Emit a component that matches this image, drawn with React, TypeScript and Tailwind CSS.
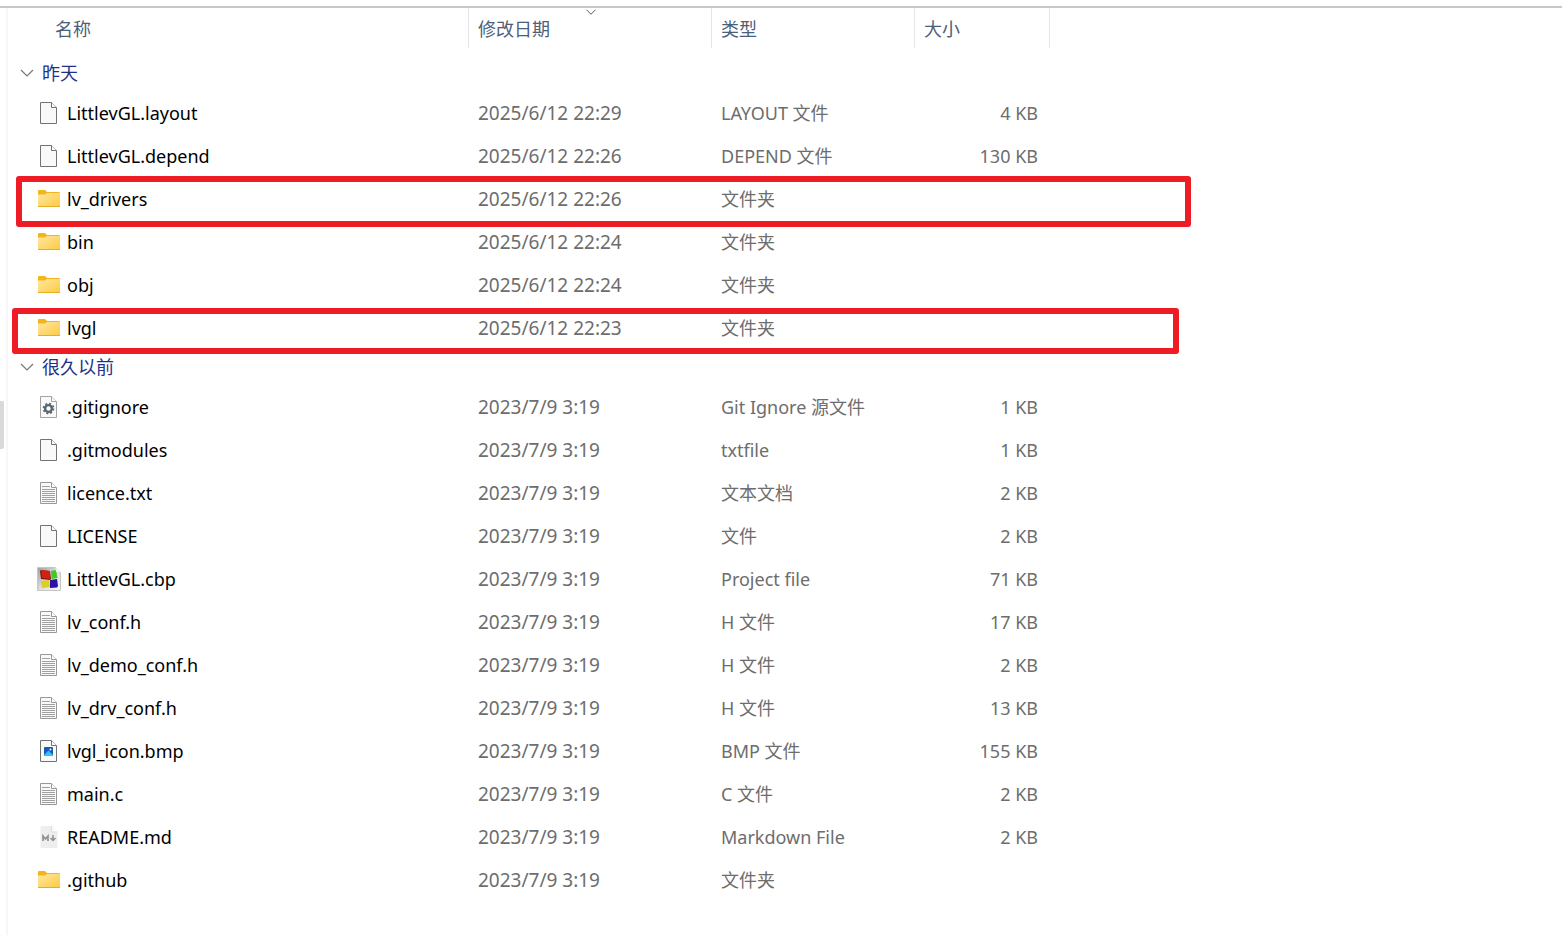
import { useState } from "react";
import type { ReactNode } from "react";

type IconKind = "page" | "folder" | "config" | "text" | "project" | "image" | "markdown";

type Entry = {
	name: string;
	date: string;
	type: string;
	size?: string;
	icon: IconKind;
	mark?: string;
};

type Group = {
	title: string;
	entries: Entry[];
};

const groups: Group[] = [
	{
		title: "昨天",
		entries: [
			{ name: "LittlevGL.layout", date: "2025/6/12 22:29", type: "LAYOUT 文件", size: "4 KB", icon: "page" },
			{ name: "LittlevGL.depend", date: "2025/6/12 22:26", type: "DEPEND 文件", size: "130 KB", icon: "page" },
			{
				name: "lv_drivers",
				date: "2025/6/12 22:26",
				type: "文件夹",
				icon: "folder",
				mark: "left-2 -top-0.5 h-[51px] w-[1175px]",
			},
			{ name: "bin", date: "2025/6/12 22:24", type: "文件夹", icon: "folder" },
			{ name: "obj", date: "2025/6/12 22:24", type: "文件夹", icon: "folder" },
			{
				name: "lvgl",
				date: "2025/6/12 22:23",
				type: "文件夹",
				icon: "folder",
				mark: "left-1 top-px h-[46px] w-[1167px]",
			},
		],
	},
	{
		title: "很久以前",
		entries: [
			{ name: ".gitignore", date: "2023/7/9 3:19", type: "Git Ignore 源文件", size: "1 KB", icon: "config" },
			{ name: ".gitmodules", date: "2023/7/9 3:19", type: "txtfile", size: "1 KB", icon: "page" },
			{ name: "licence.txt", date: "2023/7/9 3:19", type: "文本文档", size: "2 KB", icon: "text" },
			{ name: "LICENSE", date: "2023/7/9 3:19", type: "文件", size: "2 KB", icon: "page" },
			{ name: "LittlevGL.cbp", date: "2023/7/9 3:19", type: "Project file", size: "71 KB", icon: "project" },
			{ name: "lv_conf.h", date: "2023/7/9 3:19", type: "H 文件", size: "17 KB", icon: "text" },
			{ name: "lv_demo_conf.h", date: "2023/7/9 3:19", type: "H 文件", size: "2 KB", icon: "text" },
			{ name: "lv_drv_conf.h", date: "2023/7/9 3:19", type: "H 文件", size: "13 KB", icon: "text" },
			{ name: "lvgl_icon.bmp", date: "2023/7/9 3:19", type: "BMP 文件", size: "155 KB", icon: "image" },
			{ name: "main.c", date: "2023/7/9 3:19", type: "C 文件", size: "2 KB", icon: "text" },
			{ name: "README.md", date: "2023/7/9 3:19", type: "Markdown File", size: "2 KB", icon: "markdown" },
			{ name: ".github", date: "2023/7/9 3:19", type: "文件夹", icon: "folder" },
		],
	},
];

function Sheet({ stroke = "#73736f", children }: { stroke?: string; children?: ReactNode }) {
	return (
		<>
			<path d="M3.5 1.5h11l5 5v16h-16z" fill="#f9f9f9" stroke={stroke} />
			<path d="M14.5 1.5v5h5" fill="#fff" stroke={stroke} />
			{children}
		</>
	);
}

function FileIcon({ kind }: { kind: IconKind }) {
	return (
		<svg width="24" height="25" viewBox="0 0 24 25" fill="none" className="shrink-0" aria-hidden="true">
			{kind === "page" && <Sheet />}
			{kind === "folder" && (
				<>
					<defs>
						<linearGradient id="folder" x1="0" y1="0" x2="1" y2="1">
							<stop offset="0" stopColor="#ffe8a3" />
							<stop offset="1" stopColor="#fdca3f" />
						</linearGradient>
					</defs>
					<path d="M1 4a1 1 0 0 1 1-1h6l2 2h12a1 1 0 0 1 1 1v4H1z" fill="#f5b41c" />
					<path d="M1 7.5h7L10 6h13v13a1 1 0 0 1-1 1H2a1 1 0 0 1-1-1z" fill="url(#folder)" />
					<path d="M1 19.5h22" stroke="#e6ac2c" />
				</>
			)}
			{kind === "config" && (
				<Sheet stroke="#a3a3a3">
					<circle cx="11.5" cy="13.5" r="3.4" stroke="#566670" strokeWidth="2.4" />
					<circle cx="11.5" cy="13.5" r="5" stroke="#566670" strokeWidth="1.6" strokeDasharray="2 1.93" />
				</Sheet>
			)}
			{kind === "text" && (
				<Sheet stroke="#989898">
					<path
						d="M5 5.5h8M5 8.5h13M5 10.5h13M5 12.5h13M5 14.5h13M5 16.5h13M5 18.5h13M5 20.5h13"
						stroke="#a0a0a0"
					/>
				</Sheet>
			)}
			{kind === "project" && (
				<>
					<defs>
						<linearGradient id="project" x1="0" y1="0" x2="1" y2="1">
							<stop offset="0" stopColor="#9d9d9d" />
							<stop offset="0.5" stopColor="#dcdcdc" />
							<stop offset="1" stopColor="#fafafa" />
						</linearGradient>
					</defs>
					<path d="M.5.5h18l5 5v18H.5z" fill="url(#project)" stroke="#c5c5c5" />
					<path d="M18.500.5v5h5" fill="#fff" stroke="#ddd" />
					<path d="M3 4l1-1 9 1 1 8-1 1-9-1z" fill="#7c120c" />
					<path d="M4 3l9 1v8l-8-1z" fill="#d3200f" />
					<path d="M14 4l5-1 1.5 8-6 1z" fill="#45c922" />
					<path d="M4 14l8-1 1 7-8 1z" fill="#d9cf27" />
					<path d="M13 13l7-1 1 7-1 1.5-7 .5z" fill="#2a12a8" />
				</>
			)}
			{kind === "image" && (
				<Sheet>
					<rect x="7" y="8" width="9" height="9" rx="1" fill="#1659b7" />
					<path d="M7 16l4.5-4.5L16 16v1H7z" fill="#38bdf8" />
					<circle cx="13.5" cy="10.5" r="1" fill="#fff" />
				</Sheet>
			)}
			{kind === "markdown" && (
				<>
					<path d="M5 1h10l5.5 6v14.5a1.5 1.5 0 0 1-1.5 1.5H5a1.5 1.5 0 0 1-1.5-1.5v-19A1.5 1.5 0 0 1 5 1z" fill="#eee" />
					<path d="M14.5 1v6h6" fill="#fafafa" stroke="#dedede" />
					<path d="M6 16v-5l2.500 3 2.500-3v5" stroke="#909090" strokeWidth="1.7" />
					<path d="M16 10v5M13.500 13l2.500 2.500 2.500-2.500" stroke="#909090" strokeWidth="1.5" />
				</>
			)}
		</svg>
	);
}

function Chevron({ className }: { className: string }) {
	return (
		<svg viewBox="0 0 14 8" fill="none" className={className} aria-hidden="true">
			<path d="M1 1l6 6 6-6" stroke="currentColor" strokeWidth="1.2" />
		</svg>
	);
}

function HeaderButton({ label, className = "pl-[9px]" }: { label: string; className?: string }) {
	return (
		<button
			type="button"
			className={`flex h-10 w-full items-center border-r border-[#e5e5e5] pt-0.5 ${className}`}
		>
			{label}
		</button>
	);
}

export default function App() {
	const [closed, setClosed] = useState<string[]>([]);

	const toggle = (title: string) => {
		setClosed((prev) => (prev.includes(title) ? prev.filter((t) => t !== title) : [...prev, title]));
	};

	return (
		<div className="flex min-h-screen flex-col overflow-x-hidden bg-white pt-1.5 font-['Noto_Sans','Noto_Sans_CJK_SC',sans-serif] text-[18px] leading-6">
			<div className="flex flex-1 border-t-2 border-[#c8c8c8]">
				{/* Splitter handle of the navigation pane */}
				<div className="w-1.5 shrink-0 pt-[393px]">
					<div className="h-12 w-1 rounded-r-xs bg-[#d9d9d9]" />
				</div>
				<main className="min-w-0 flex-1 border-l-2 border-[#f7f7f7]">
					<table className="w-full table-fixed border-collapse text-left text-[#6d6d6d]">
						<colgroup>
							<col className="w-[461px]" />
							<col className="w-[243px]" />
							<col className="w-[203px]" />
							<col className="w-[135px]" />
							<col />
						</colgroup>
						<thead className="text-[#4c607a]">
							<tr className="h-12 align-top">
								<th className="p-0 font-normal">
									<HeaderButton label="名称" className="pl-[47px]" />
								</th>
								<th className="relative p-0 font-normal" aria-sort="descending">
									<HeaderButton label="修改日期" />
									<Chevron className="absolute top-px left-1/2 h-1.5 w-3 -translate-x-1/2 text-[#444]" />
								</th>
								<th className="p-0 font-normal">
									<HeaderButton label="类型" />
								</th>
								<th className="p-0 font-normal">
									<HeaderButton label="大小" />
								</th>
								<td />
							</tr>
						</thead>
						{groups.map((group) => (
							<tbody key={group.title}>
								<tr className="h-9">
									<th colSpan={5} className="p-0 pb-0.5 font-normal">
										<button
											type="button"
											aria-expanded={!closed.includes(group.title)}
											onClick={() => toggle(group.title)}
											className="flex items-center gap-2 pl-3 text-[#1e3287]"
										>
											<Chevron className="h-2 w-3.5 text-[#777]" />
											{group.title}
										</button>
									</th>
								</tr>
								{!closed.includes(group.title) &&
									group.entries.map((entry) => (
										<tr key={entry.name} className="relative h-[43px]">
											<td className="p-0">
												<div className="flex items-center gap-1.5 pl-[29px] text-black">
													<FileIcon kind={entry.icon} />
													<span className="pb-0.5">{entry.name}</span>
												</div>
												{entry.mark && (
													<div
														className={`pointer-events-none absolute rounded-[3px] border-6 border-[#ee1c25] ${entry.mark}`}
													/>
												)}
											</td>
											<td className="p-0 pb-0.5 pl-[9px] text-[19px]">{entry.date}</td>
											<td className="p-0 pb-0.5 pl-[9px]">{entry.type}</td>
											<td className="p-0 pr-3 pb-0.5 text-right">{entry.size}</td>
											<td />
										</tr>
									))}
							</tbody>
						))}
					</table>
				</main>
			</div>
		</div>
	);
}
